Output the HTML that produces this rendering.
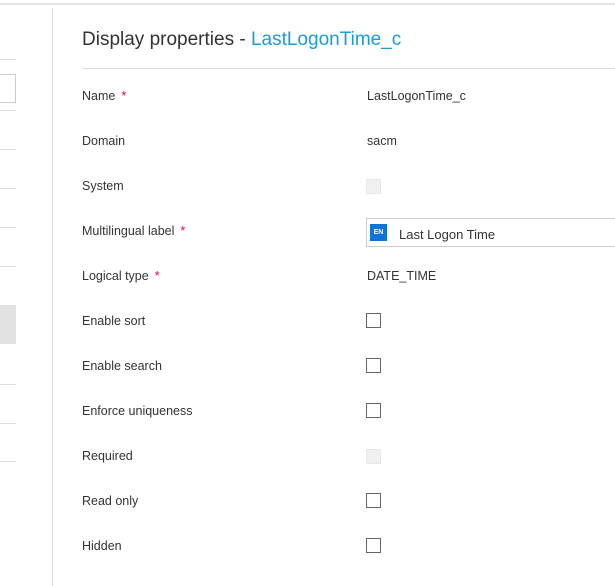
<!DOCTYPE html>
<html><head><style>
body{margin:0;width:615px;height:586px;background:#fff;font-family:"Liberation Sans",sans-serif;position:relative;overflow:hidden;color:#333}
.a{position:absolute}
.hl{position:absolute;left:0;width:16px;height:1px;background:#ddd}
.lab{position:absolute;left:82px;font-size:12.5px;color:#333}
.lab b{color:#e5004c;font-weight:normal;margin-left:6px}
.val{position:absolute;left:367px;font-size:12.5px;color:#333}
.cb{position:absolute;left:366px;width:15px;height:15px;border:1px solid #666;box-sizing:border-box;background:#fff}
.cb.d{border:1px solid #e8e8e8;background:#f0f0f0}
</style></head><body>
<div class="a" style="left:0;top:3px;width:615px;height:2px;background:#e4e4e4"></div>
<div class="a" style="left:52px;top:8px;width:1px;height:578px;background:#ddd"></div>
<div class="hl" style="top:59px"></div>
<div class="a" style="left:-1px;top:74px;width:17px;height:29px;border:1px solid #ccc;box-sizing:border-box"></div>
<div class="hl" style="top:110px"></div>
<div class="hl" style="top:149px"></div>
<div class="hl" style="top:188px"></div>
<div class="hl" style="top:227px"></div>
<div class="hl" style="top:266px"></div>
<div class="a" style="left:0;top:305px;width:16px;height:39px;background:#e2e2e2"></div>
<div class="hl" style="top:384px"></div>
<div class="hl" style="top:423px"></div>
<div class="hl" style="top:461px"></div>

<div class="a" style="left:82px;top:29px;font-size:19px;color:#333">Display properties - <span style="color:#1a9cd8">LastLogonTime_c</span></div>
<div class="a" style="left:82px;top:68px;width:533px;height:1px;background:#ddd"></div>

<div class="lab" style="top:89px">Name<b>*</b></div><div class="val" style="top:89px">LastLogonTime_c</div>
<div class="lab" style="top:134px">Domain</div><div class="val" style="top:134px">sacm</div>
<div class="lab" style="top:179px">System</div><div class="cb d" style="top:179px"></div>
<div class="lab" style="top:224px">Multilingual label<b>*</b></div>
<div class="a" style="left:366px;top:218px;width:260px;height:29px;border:1px solid #ccc;box-sizing:border-box"></div>
<div class="a" style="left:370px;top:224px;width:17px;height:17px;background:#0f73d8;color:#fff;font-size:7px;font-weight:bold;text-align:center;line-height:17px">EN</div>
<div class="val" style="left:399px;top:227px;font-size:13px">Last Logon Time</div>
<div class="lab" style="top:269px">Logical type<b>*</b></div><div class="val" style="top:269px">DATE_TIME</div>
<div class="lab" style="top:314px">Enable sort</div><div class="cb" style="top:313px"></div>
<div class="lab" style="top:359px">Enable search</div><div class="cb" style="top:358px"></div>
<div class="lab" style="top:404px">Enforce uniqueness</div><div class="cb" style="top:403px"></div>
<div class="lab" style="top:449px">Required</div><div class="cb d" style="top:449px"></div>
<div class="lab" style="top:494px">Read only</div><div class="cb" style="top:493px"></div>
<div class="lab" style="top:539px">Hidden</div><div class="cb" style="top:538px"></div>
</body></html>
